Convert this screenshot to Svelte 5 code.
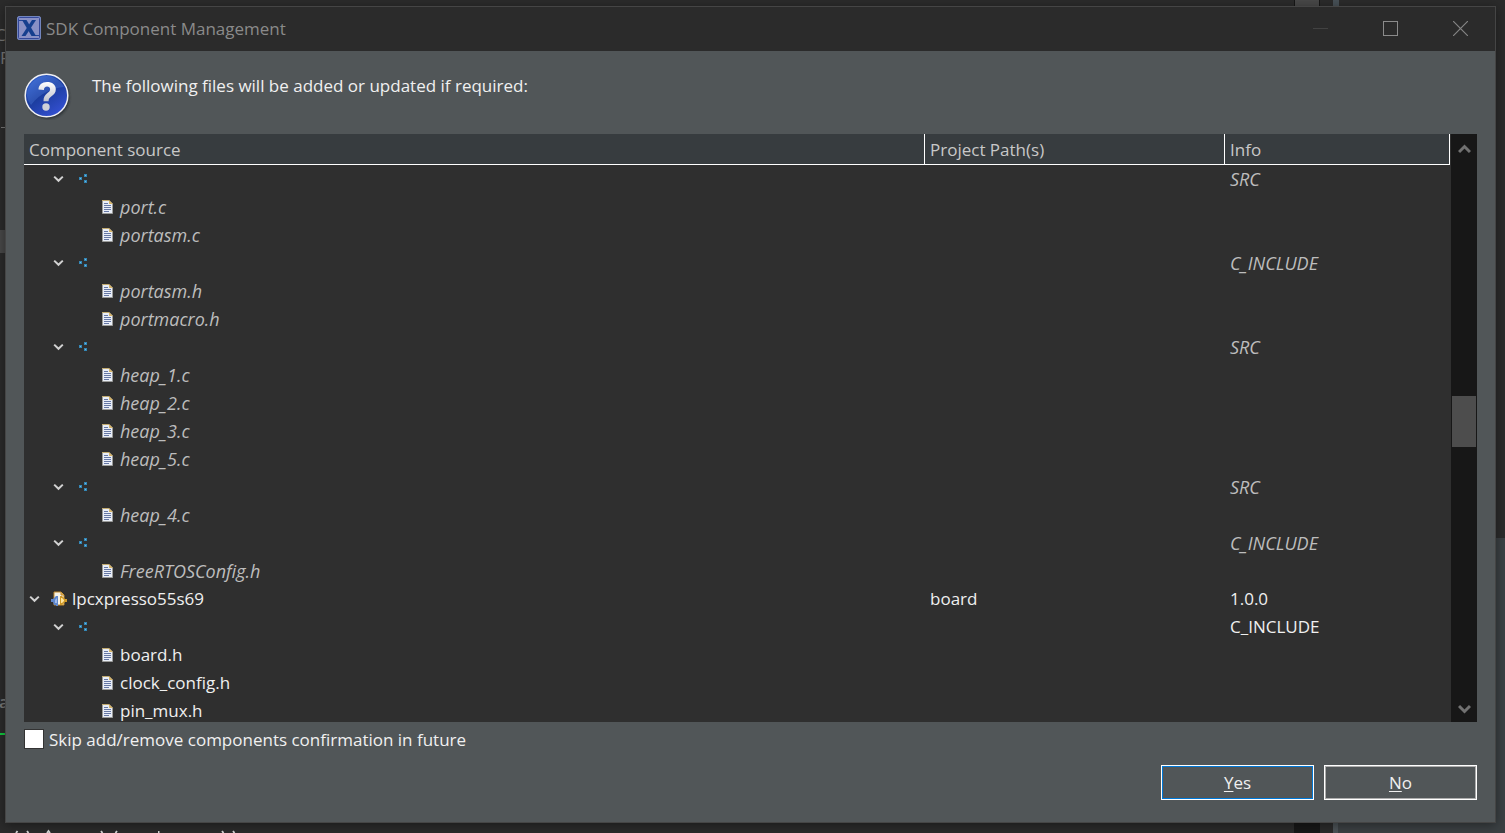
<script>
  const rows = [
    { kind: 'group', info: 'SRC', dim: true },
    { kind: 'file', name: 'port.c', dim: true },
    { kind: 'file', name: 'portasm.c', dim: true },
    { kind: 'group', info: 'C_INCLUDE', dim: true },
    { kind: 'file', name: 'portasm.h', dim: true },
    { kind: 'file', name: 'portmacro.h', dim: true },
    { kind: 'group', info: 'SRC', dim: true },
    { kind: 'file', name: 'heap_1.c', dim: true },
    { kind: 'file', name: 'heap_2.c', dim: true },
    { kind: 'file', name: 'heap_3.c', dim: true },
    { kind: 'file', name: 'heap_5.c', dim: true },
    { kind: 'group', info: 'SRC', dim: true },
    { kind: 'file', name: 'heap_4.c', dim: true },
    { kind: 'group', info: 'C_INCLUDE', dim: true },
    { kind: 'file', name: 'FreeRTOSConfig.h', dim: true },
    { kind: 'board', name: 'lpcxpresso55s69', path: 'board', info: '1.0.0' },
    { kind: 'group', info: 'C_INCLUDE' },
    { kind: 'file', name: 'board.h' },
    { kind: 'file', name: 'clock_config.h' },
    { kind: 'file', name: 'pin_mux.h' }
  ];
  let skip = $state(false);
</script>

{#snippet chevron()}
  <svg class="chevron" width="11" height="8" viewBox="0 0 11 8"><path d="M1.2 1.6 L5.5 5.8 L9.8 1.6" fill="none" stroke="#d2d2d2" stroke-width="2" /></svg>
{/snippet}

<div class="page">
  <div class="backdrop" aria-hidden="true">
    <span class="frag c">C</span>
    <span class="frag f">F</span>
    <span class="frag dash"></span>
    <span class="frag block"></span>
    <span class="frag a">a</span>
    <span class="frag green"></span>
    <span class="frag topthumb"></span>
    <span class="frag topsash"></span>
    <span class="frag rightpane"></span>
    <span class="frag bottompane"></span>
    <span class="frag bottomtrack"></span>
    <svg class="frag code" width="260" height="11" viewBox="0 0 260 11">
      <path d="M12 .5h8" stroke="#8b98a0" />
      <path d="M16 11l1.500-2M27 9l1.500 2M47 11l1.500-2l1.500 2M101 9l1.500 2M117 9l-1.500 2M158 10h1.500M222 9l1.500 2M233 9l1.500 2" fill="none" stroke="#d8d8d8" stroke-width="1.800" />
    </svg>
  </div>

  <section class="dialog">
    <header class="titlebar">
      <svg class="appicon" width="24" height="24" viewBox="0 0 24 24">
        <rect x=".5" y=".5" width="23" height="23" rx="1.5" fill="#8990c5" stroke="#7285bd" />
        <rect x="1.5" y="1.5" width="21" height="21" rx="1" fill="none" stroke="#34489a" />
        <path d="M2 4.500h5M16 19.500h6" stroke="#24489a" />
        <path d="M5 4h4.500l9.500 16h-4.500z" fill="#163f8e" />
        <path d="M15 4h4L8.500 20h-4z" fill="#163f8e" />
      </svg>
      <h1>SDK Component Management</h1>
      <div class="winbtns">
        <button aria-label="Minimize" disabled><svg width="15" height="15" viewBox="0 0 15 15"><path d="M0 7.500h15" stroke="#424242" /></svg></button>
        <button aria-label="Maximize"><svg width="15" height="15" viewBox="0 0 15 15"><rect x=".5" y=".5" width="14" height="14" fill="none" stroke="#8b8b8b" /></svg></button>
        <button aria-label="Close"><svg width="15" height="15" viewBox="0 0 15 15"><path d="M0 0l15 15M15 0L0 15" stroke="#858585" stroke-width="1.200" /></svg></button>
      </div>
    </header>

    <div class="content">
      <div class="message">
        <svg class="question" width="48" height="48" viewBox="0 0 48 48">
          <defs>
            <linearGradient id="ball" x1="0" y1="0" x2=".7" y2="1"><stop offset="0" stop-color="#3d6fdc" /><stop offset=".5" stop-color="#1b3c9c" /><stop offset="1" stop-color="#3450d2" /></linearGradient>
            <linearGradient id="mark" x1="0" y1="0" x2="0" y2="1"><stop offset="0" stop-color="#fff" /><stop offset="1" stop-color="#bfc2cd" /></linearGradient>
            <filter id="soft" x="-20%" y="-20%" width="140%" height="140%"><feGaussianBlur stdDeviation="1" /></filter>
          </defs>
          <circle cx="24" cy="25.500" r="21.500" fill="#202529" opacity=".7" filter="url(#soft)" />
          <circle cx="22.500" cy="23.500" r="21.300" fill="url(#ball)" stroke="#eeeef2" stroke-width="1.500" />
          <path d="M3 24a19.500 19.500 0 0 1 37-9C29 16 16 21 7 33A20 20 0 0 1 3 24z" fill="#5c8aec" opacity=".3" />
          <path d="M14.500 17.500c0-4.500 3.500-7.500 8.500-7.500 5.300 0 8.800 2.700 8.800 7.200 0 3.200-1.500 5-4.300 7-2.300 1.700-2.900 2.500-2.900 5h-5.100c0-4 1.200-6 4-8.200 1.900-1.500 2.600-2.300 2.600-3.800 0-1.700-1.200-2.700-3-2.700-2 0-3.200 1.200-3.200 3.600z" fill="url(#mark)" />
          <circle cx="22" cy="35" r="3.700" fill="#ced0d8" />
        </svg>
        <p>The following files will be added or updated if required:</p>
      </div>

      <div class="viewer">
        <div class="scroll">
          <table>
            <colgroup><col /><col class="paths" /><col class="info" /></colgroup>
            <thead>
              <tr><th>Component source</th><th>Project Path(s)</th><th>Info</th></tr>
            </thead>
            <tbody>
              {#each rows as row}
                <tr class:dim={row.dim}>
                  <td>
                    <div class="node {row.kind}">
                      {#if row.kind === 'group'}
                        {@render chevron()}
                        <svg class="dots" width="9" height="9" viewBox="0 0 9 9"><path fill="#3486b5" d="M0 3h3v3H0zM5 0h3v3H5zM5 6h3v3H5z" /><path fill="#66bfe9" d="M1 4h1v1H1zM6 1h1v1H6zM6 7h1v1H6z" /></svg>
                      {:else if row.kind === 'board'}
                        {@render chevron()}
                        <svg class="boardicon" width="16" height="16" viewBox="0 0 16 16">
                          <path d="M3 1h7l3 3v10H3z" fill="#f5f2e7" stroke="#c28a2c" />
                          <path d="M10 1v3h3" fill="#e0b65b" stroke="#c28a2c" />
                          <path d="M9 5h2l3 3h2v3h-2l-3 3H9z" fill="#d09a28" /><path d="M10 7h1l2 2v1l-2 2h-1z" fill="#ffe6a0" />
                          <path d="M7 5H5L2 8H0v3h2l1 3h2v1h2z" fill="#5f87cd" /><path d="M6 7L4 9v3h2z" fill="#9cbbee" />
                        </svg>
                        <span>{row.name}</span>
                      {:else}
                        <svg class="fileicon" width="11" height="14" viewBox="0 0 11 14">
                          <path d="M.5.5H7L10.500 4v9.500H.5z" fill="#e9eef8" stroke="#9b9c9a" />
                          <path d="M0 .5h7" stroke="#c1aa70" /><path d="M7 0l4 4H7z" fill="#d7b66c" />
                          <path d="M2 3.500h4M2 5.500h7M2 7.500h7M2 9.500h7M2 11.500h5" stroke="#6678a5" />
                        </svg>
                        <span>{row.name}</span>
                      {/if}
                    </div>
                  </td>
                  <td>{row.path ?? ''}</td>
                  <td>{row.info ?? ''}</td>
                </tr>
              {/each}
            </tbody>
          </table>
        </div>
        <div class="bar">
          <button aria-label="Scroll up"><svg width="13" height="10" viewBox="0 0 13 10"><path d="M1 8L6.500 2.500L12 8" fill="none" stroke="#717171" stroke-width="3" /></svg></button>
          <div class="track"><div class="thumb"></div></div>
          <button aria-label="Scroll down"><svg width="13" height="10" viewBox="0 0 13 10"><path d="M1 2L6.500 7.500L12 2" fill="none" stroke="#717171" stroke-width="3" /></svg></button>
        </div>
      </div>

      <label class="skip"><input type="checkbox" bind:checked={skip} /><span>Skip add/remove components confirmation in future</span></label>

      <div class="actions">
        <button class="yes"><u>Y</u>es</button>
        <button class="no"><u>N</u>o</button>
      </div>
    </div>
  </section>
</div>

<style>
  :global(body) { margin: 0; background: #2b2b2b; }
  .page {
    position: relative;
    box-sizing: border-box;
    height: 100vh;
    min-height: 480px;
    padding: 6px 9px 10px 5px;
    display: flex;
    overflow: hidden;
    background: #2b2b2b;
    font: 17px/28px "Open Sans", "Noto Sans", sans-serif;
    color: #f0f0f0;
  }
  button { font: inherit; color: inherit; padding: 0; border: 0; background: none; }
  .backdrop { position: absolute; inset: 0; }
  .frag { position: absolute; color: #777; }
  .c { left: -5px; top: 21px; }
  .f { left: 0; top: 44px; }
  .a { left: -1px; top: 688px; font-weight: 600; }
  .dash { left: 1px; top: 127px; width: 5px; height: 1px; background: #777; }
  .block { left: 0; top: 230px; width: 5px; height: 23px; background: #484848; }
  .green { left: 0; top: 733px; width: 5px; height: 2px; background: #12c83e; }
  .topthumb { right: 185px; top: 0; width: 24px; height: 7px; background: #484848; border: solid #171717; border-width: 0 1px; }
  .topsash { right: 166px; top: 0; width: 6px; height: 6px; background: #475056; }
  .rightpane { right: 0; top: 538px; bottom: 0; width: 9px; background: #3b4043; }
  .bottompane { right: 0; bottom: 0; width: 167px; height: 10px; background: #3b4043; border-left: 5px solid #4b5256; }
  .bottomtrack { right: 185px; bottom: 0; width: 26px; height: 10px; background: #171717; }
  .code { left: 0; bottom: 0; }

  .dialog {
    position: relative;
    flex: 1;
    min-width: 0;
    display: flex;
    flex-direction: column;
    border: 1px solid #454545;
    background: #515658;
    box-shadow: 0 2px 10px rgba(0, 0, 0, 0.4);
  }
  .titlebar { display: flex; align-items: center; height: 44px; padding-left: 11px; background: #2b2b2b; color: #8a8a8a; }
  .appicon { margin-bottom: 2px; }
  h1 { flex: 1; margin: 0 0 0 5px; font-size: 17px; font-weight: 400; }
  .winbtns { display: flex; height: 43px; align-self: flex-start; }
  .winbtns button { width: 70px; display: grid; place-items: center; }
  .content { flex: 1; min-height: 0; display: flex; flex-direction: column; padding: 21px 18px 22px; }
  .message { display: flex; height: 62px; gap: 20px; }
  .message p { margin: 0; }
  .viewer { flex: 1; min-height: 0; display: flex; background: #2f2f2f; }
  .scroll { flex: 1; min-width: 0; overflow: hidden; padding-right: 1px; }
  table { width: 100%; border-collapse: separate; border-spacing: 0; table-layout: fixed; }
  .paths { width: 300px; }
  .info { width: 225px; }
  th { box-sizing: border-box; height: 31px; padding: 2px 5px 0; text-align: left; font-weight: 400; color: #c8c8c8; background: #373c3f; border-right: 1px solid #fff; border-bottom: 1px solid #fff; }
  td { height: 28px; padding: 0 5px; white-space: nowrap; }
  .dim { font-size: 18px; font-style: italic; color: #bdbdbd; }
  .node { display: flex; align-items: center; height: 28px; }
  .group { padding-left: 24px; gap: 15px; }
  .file { padding-left: 73px; gap: 7px; }
  .board { gap: 5px; }
  .boardicon { margin-left: 6px; }
  .dots { margin-bottom: 2px; }
  .bar { width: 26px; display: flex; flex-direction: column; background: #171717; }
  .bar button { height: 28px; padding-top: 2px; display: grid; place-items: center; }
  .track { flex: 1; padding: 0 1px; }
  .thumb { height: 51px; margin-top: 234px; background: #4d4d4d; }
  .skip { display: flex; align-items: center; gap: 5px; height: 34px; margin-top: 1px; }
  .skip input { appearance: none; width: 20px; height: 20px; margin: 0 0 2px; border: 1px solid #333; background: #fff; }
  .skip input:checked { background: #0078d7; }
  .actions { display: flex; justify-content: flex-end; gap: 10px; margin-top: 8px; }
  .actions button { width: 153px; height: 35px; border: 1px solid #fff; }
  .actions .yes { box-shadow: inset 0 0 0 1px #0078d7; }
  .actions .no { box-shadow: inset 0 0 0 1px #adadad; }
  u { text-underline-offset: 2px; }
</style>
